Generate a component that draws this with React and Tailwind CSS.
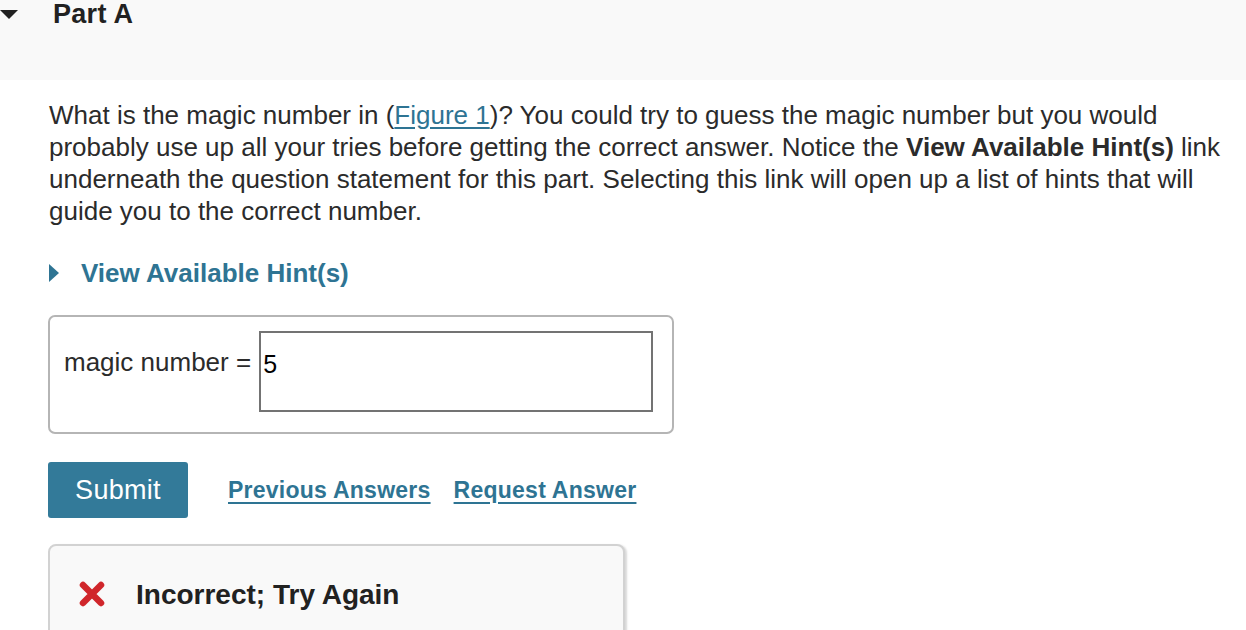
export default function App() {
  return (
    <div
      className="min-h-screen w-[1246px] h-[630px] overflow-hidden bg-white text-[#212121]"
      style={{ fontFamily: '"Liberation Sans", Arial, sans-serif' }}
    >
      {/* part header */}
      <div className="h-[80px] bg-[#f9f9f9] flex items-start">
        <div className="w-[53px] pt-[10px] pl-0">
          <svg width="18" height="10" viewBox="0 0 18 10">
            <path d="M0 0 H18 L9 9 Z" fill="#212121" />
          </svg>
        </div>
        <h2 className="text-[27px] font-bold leading-[28px] tracking-[0.3px]">Part A</h2>
      </div>

      <div className="pl-[49px] pr-[10px]">
        <p className="mt-[19px] text-[26px] leading-[32px] tracking-[0px] text-[#2b2b2b]">
          What is the magic number in (
          <a href="#" className="text-[#2e7493] underline underline-offset-[3px]">
            Figure 1
          </a>
          )? You could try to guess the magic number but you would
          <br />
          probably use up all your tries before getting the correct answer. Notice the{' '}
          <b>View Available Hint(s)</b> link
          <br />
          underneath the question statement for this part. Selecting this link will open up a list of hints that will
          <br />
          guide you to the correct number.
        </p>

        <div className="mt-[30px] flex items-center h-[32px]">
          <svg width="10" height="18" viewBox="0 0 10 18" className="mr-[22px]">
            <path d="M0 0 L10 9 L0 18 Z" fill="#2e7493" />
          </svg>
          <span className="text-[26px] font-bold text-[#2e7493]">View Available Hint(s)</span>
        </div>
      </div>

      <div className="ml-[48px] mt-[26px] w-[626px] h-[119px] border-2 border-[#b5b5b5] rounded-[7px] flex items-start pl-[14px] pt-[14px]">
        <span className="text-[26px] leading-[32px] mt-[15px] mr-[8px] text-[#2b2b2b]">magic number =</span>
        <div className="w-[394px] h-[81px] border-2 border-[#737373] bg-white flex items-start pl-[2px] pt-[16px]">
          <span className="text-[25px] leading-[30px] text-black">5</span>
        </div>
      </div>

      <div className="ml-[48px] mt-[28px] flex items-center">
        <button className="w-[140px] h-[56px] bg-[#337a99] rounded-[3px] text-white text-[27px] tracking-[0.3px]">
          Submit
        </button>
        <a
          href="#"
          className="ml-[40px] text-[23px] font-bold tracking-[0.25px] text-[#2e7493] underline underline-offset-[4px]"
        >
          Previous Answers
        </a>
        <a
          href="#"
          className="ml-[23px] text-[23px] font-bold tracking-[0.25px] text-[#2e7493] underline underline-offset-[4px]"
        >
          Request Answer
        </a>
      </div>

      <div className="ml-[48px] mt-[26px] w-[577px] h-[120px] bg-[#f9f9f9] border-2 border-[#d2d2d2] rounded-[8px] shadow-[2px_1px_2px_rgba(0,0,0,0.15)] flex items-start pl-[28px] pt-[34px]">
        <svg width="28" height="28" viewBox="0 0 28 28" className="mr-[30px]">
          <path d="M5 5 L23 23 M23 5 L5 23" stroke="#d0262b" strokeWidth="6.5" strokeLinecap="round" />
        </svg>
        <span className="text-[28px] font-bold leading-[30px]">Incorrect; Try Again</span>
      </div>
    </div>
  )
}
